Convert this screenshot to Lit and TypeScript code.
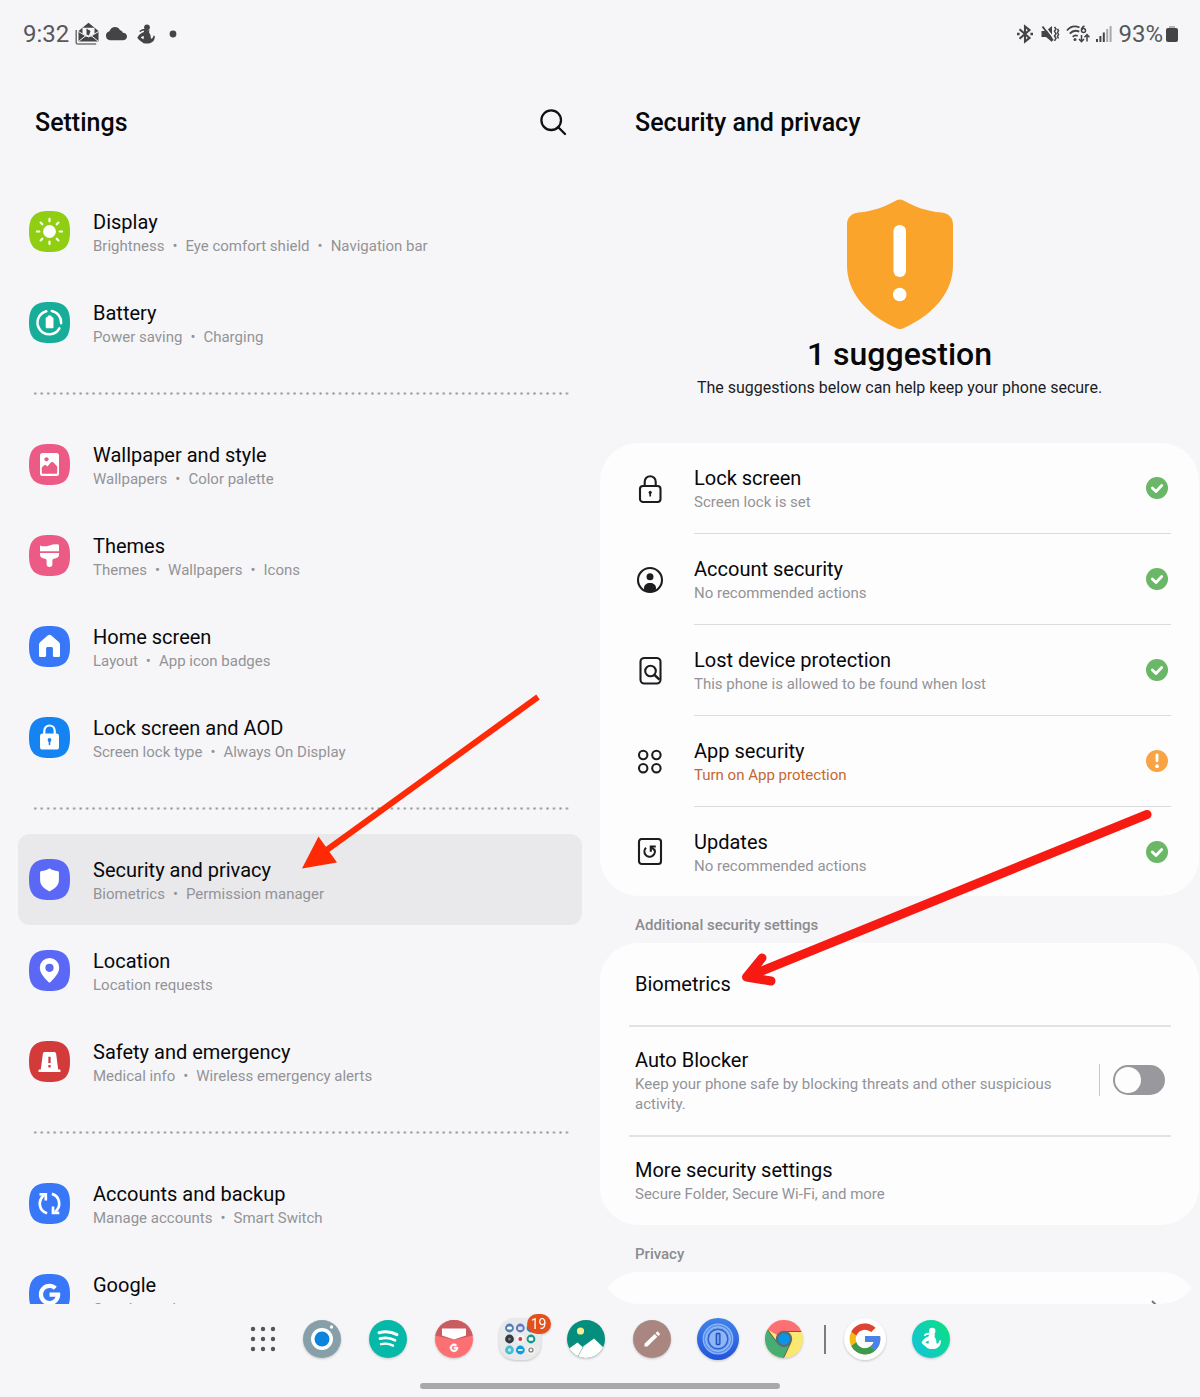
import { LitElement, html, css, svg, nothing, type TemplateResult, type SVGTemplateResult } from "lit";
import { customElement, state } from "lit/decorators.js";
import { classMap } from "lit/directives/class-map.js";

interface MenuItem {
  title: string;
  details: string[];
  color: string;
  glyph: SVGTemplateResult;
  selected?: boolean;
}

interface SecurityItem {
  title: string;
  detail: string;
  glyph: SVGTemplateResult;
  ok: boolean;
}

const G_PATH =
  "M43.6 20H24v8h11.3c-1.6 4.7-6.1 8-11.3 8-6.6 0-12-5.4-12-12s5.4-12 12-12c3.1 0 5.8 1.2 8 3l5.6-5.6C34 6.1 29.3 4 24 4 13 4 4 13 4 24s9 20 20 20 20-9 20-20c0-1.3-.1-2.7-.4-4z";

/* Glyphs for the coloured menu tiles, on a 41 x 41 grid. */
const sun = svg`<circle cx="20.5" cy="20.5" r="6.4" fill="#fff"/>
  <g stroke="#fff" stroke-width="2.2" stroke-linecap="round">
    ${[0, 45, 90, 135, 180, 225, 270, 315].map(
      (a) => svg`<path d="M20.500 7.900v2.400" transform=${`rotate(${a} 20.5 20.5)`}/>`
    )}
  </g>`;
const battery = svg`<g fill="none" stroke="#fff" stroke-width="2.500" stroke-linecap="round">
    <path d="M17.300 9.200A11.700 11.700 0 1 0 30.400 26.300"/>
    <path d="M22.800 9A11.700 11.700 0 0 1 32.100 21.200"/></g>
  <path fill="#fff" d="M18.600 15.200v-.6c0-.6.4-1 1-1h2c.6 0 1 .4 1 1v.6h.6c.8 0 1.300.5 1.300 1.300v8.400c0 .8-.5 1.300-1.300 1.300h-5.200c-.8 0-1.300-.5-1.300-1.300v-8.400c0-.8.500-1.300 1.300-1.300z"/>`;
const wallpaper = svg`<rect x="11" y="9" width="19" height="23" rx="2.500" fill="#fff"/>
  <circle cx="17.500" cy="15.300" r="2.100" fill="#ec5a86"/>
  <path fill="#ec5a86" d="M12.800 23.800c1.500-2.200 3-3.400 4.200-2.500l1.400 1.100 3.200-3.600c1-1.100 2.200-1.100 3.200 0l3.400 3.700v5.900c0 .8-.5 1.300-1.300 1.300H14.100c-.8 0-1.300-.5-1.300-1.300z"/>`;
const brush = svg`<g fill="#fff"><path d="M11 10.400c3 1.600 6 .8 9.500 0 3.500-1 6.500-1.400 9.500-.6v6.400H11z"/>
  <path d="M11 18h19v1.600c0 2.600-1.600 3.600-4 3.800-2 .2-2.600.8-2.600 2.400v3.200a2.900 2.900 0 0 1-5.800 0v-3.200c0-1.600-.6-2.200-2.600-2.400-2.400-.2-4-1.200-4-3.800z"/></g>`;
const home = svg`<path fill="#fff" d="M19 9.300c.9-.8 2.100-.8 3 0l7.800 6.700c.8.7 1.200 1.500 1.200 2.500v10.900c0 1-.6 1.600-1.600 1.600h-4c-.9 0-1.500-.6-1.500-1.500v-7c0-.9-.6-1.500-1.500-1.500h-3.800c-.9 0-1.500.6-1.500 1.500v7c0 .9-.6 1.500-1.500 1.500h-4c-1 0-1.600-.6-1.600-1.600V18.500c0-1 .4-1.800 1.200-2.500z"/>`;
const padlock = svg`<path d="M15.300 18v-4.300a5.200 5.200 0 0 1 10.400 0V18" fill="none" stroke="#fff" stroke-width="2.200"/>
  <rect x="11" y="16.500" width="19" height="16" rx="2.600" fill="#fff"/>
  <circle cx="20.500" cy="23" r="1.900" fill="#1583f2"/><path d="M20.500 23v4.500" stroke="#1583f2" stroke-width="1.600" stroke-linecap="round"/>`;
const shield = svg`<path fill="#fff" d="M20.500 9.200c2.700 1.800 5.300 2.600 8 2.800.9.100 1.400.7 1.400 1.500v7.600c0 5.300-4 9-9.400 11.300-5.400-2.300-9.400-6-9.400-11.300v-7.600c0-.8.5-1.400 1.400-1.500 2.700-.2 5.300-1 8-2.800z"/>`;
const pin = svg`<path fill="#fff" fill-rule="evenodd" d="M20.500 8a9.700 9.700 0 0 0-9.700 9.700c0 5.600 5 10.600 8.600 14.300.7.700 1.500.7 2.200 0 3.600-3.700 8.600-8.700 8.600-14.300A9.700 9.700 0 0 0 20.500 8zm0 13.900a4.100 4.100 0 1 1 0-8.200 4.100 4.100 0 0 1 0 8.200z"/>`;
const siren = svg`<path fill="#fff" d="M15.800 11h9.400c1 0 1.700.6 1.900 1.600l2.100 15.800h1.300c.6 0 1 .4 1 1V31h-22v-1.600c0-.6.4-1 1-1h1.300l2.100-15.800c.2-1 .9-1.600 1.900-1.600z"/>
  <path d="M20.500 15.700v6.300M20.500 24v2.400" stroke="#d33b3b" stroke-width="2.300"/>`;
const sync = svg`<g fill="none" stroke="#fff" stroke-width="2.700"><path d="M18.100 30.300C9.800 27.800 8.400 18 14.900 12.200"/>
  <path d="M10.500 11.300h6.300v6.300"/><path d="M22.900 10.900c8.300 2.500 9.700 12.300 3.200 18.100"/><path d="M30.300 29.900H24v-6.300"/></g>`;
const googleG = svg`<path fill="#fff" transform="translate(7.700 7.700) scale(.535)" d=${G_PATH}/>`;

const MENU: MenuItem[][] = [
  [
    { title: "Display", details: ["Brightness", "Eye comfort shield", "Navigation bar"], color: "#8fce12", glyph: sun },
    { title: "Battery", details: ["Power saving", "Charging"], color: "#17ad98", glyph: battery },
  ],
  [
    { title: "Wallpaper and style", details: ["Wallpapers", "Color palette"], color: "#ec5a86", glyph: wallpaper },
    { title: "Themes", details: ["Themes", "Wallpapers", "Icons"], color: "#ec5a86", glyph: brush },
    { title: "Home screen", details: ["Layout", "App icon badges"], color: "#3878f8", glyph: home },
    { title: "Lock screen and AOD", details: ["Screen lock type", "Always On Display"], color: "#1583f2", glyph: padlock },
  ],
  [
    { title: "Security and privacy", details: ["Biometrics", "Permission manager"], color: "#5b68f6", glyph: shield, selected: true },
    { title: "Location", details: ["Location requests"], color: "#5b68f6", glyph: pin },
    { title: "Safety and emergency", details: ["Medical info", "Wireless emergency alerts"], color: "#d33b3b", glyph: siren },
  ],
  [
    { title: "Accounts and backup", details: ["Manage accounts", "Smart Switch"], color: "#3878f8", glyph: sync },
    { title: "Google", details: ["Google services"], color: "#3878f8", glyph: googleG },
  ],
];

/* Line glyphs for the security card, on a 28 x 28 grid. */
const SECURITY: SecurityItem[] = [
  {
    title: "Lock screen",
    detail: "Screen lock is set",
    ok: true,
    glyph: svg`<rect x="4" y="11" width="20.500" height="16" rx="3"/><path d="M8.700 11V6.700a5.500 5.500 0 0 1 11 0v4.300"/>
      <circle cx="14.200" cy="17.500" r="1.200" fill="#1d1d20" stroke-width="1"/><path d="M14.200 18v3.500" stroke-width="1.700"/>`,
  },
  {
    title: "Account security",
    detail: "No recommended actions",
    ok: true,
    glyph: svg`<circle cx="14" cy="14" r="12"/><circle cx="14" cy="10.700" r="3.500" fill="#1d1d20" stroke="none"/>
      <path d="M8 23.500v-1.500c0-3 2.500-5 6-5s6 2 6 5v1.500c-3.500 3-8.500 3-12 0z" fill="#1d1d20" stroke="none"/>`,
  },
  {
    title: "Lost device protection",
    detail: "This phone is allowed to be found when lost",
    ok: true,
    glyph: svg`<rect x="4.500" y="1" width="20" height="25.500" rx="3.800"/><circle cx="14.500" cy="14" r="5.300"/><path d="M18.500 18l5 4.600" stroke-width="2.400"/>`,
  },
  {
    title: "App security",
    detail: "Turn on App protection",
    ok: false,
    glyph: svg`<circle cx="7.200" cy="7" r="4.200"/><circle cx="20.400" cy="7" r="4.200"/><circle cx="7.200" cy="20.200" r="4.200"/><circle cx="20.400" cy="20.200" r="4.200"/>`,
  },
  {
    title: "Updates",
    detail: "No recommended actions",
    ok: true,
    glyph: svg`<rect x="3" y="1" width="22" height="25" rx="2.800"/><path d="M10 9.800a5.200 5.200 0 1 0 8.200 1.200"/><path d="M19.800 8.500h-5v5.200"/><path d="M14.800 8.500l3.600 3.500"/>`,
  },
];

const figure = svg`<circle cx="10.500" cy="3.400" r="3"/>
  <path d="M8.300 5.300c1.600 1.500 4.100 1.600 4.800.6l-.5 3c1.200 1.500 2 3.300 1.800 5.700l.7.700c1.300-.4 1.900-1.700 2.200-3.300l1.300.3c.1 2.600-.6 4.600-2.300 6-1.600 1.400-3.600 2-6 2-2.500 0-4.300-.7-5.400-2C2.800 17 1.300 15.600.500 14.200c1.200-2.800 3.600-4.700 6.800-5.900l.2-1.300C5.800 6.800 4.700 7.200 3.800 8.300l-1.300-.6C3.600 5.700 5.900 4.700 8.300 5.300zM4 14c1 .8 2 1.400 3 1.700l.3-3.200C6 12.600 5 13 4 14z" fill-rule="evenodd"/>`;

interface DockApp {
  name: string;
  art: TemplateResult;
  badge?: string;
}

/* Dock artwork, on a 42 x 42 grid. */
const DOCK: DockApp[] = [
  {
    name: "Camera",
    art: html`<svg viewBox="0 0 42 42" aria-hidden="true"><circle cx="21" cy="21" r="19" fill="#869fa8"/>
      <circle cx="21" cy="21" r="11" fill="#fff"/><circle cx="21" cy="21" r="7.500" fill="#0a84dc"/><circle cx="30.500" cy="9" r="1.700" fill="#fff"/></svg>`,
  },
  {
    name: "Spotify",
    art: html`<svg viewBox="0 0 42 42" aria-hidden="true"><circle cx="21" cy="21" r="19" fill="#06b8a8"/>
      <g fill="none" stroke="#fff" stroke-linecap="round"><path d="M12 14.700c6-1.600 12.500-1.100 18 1.900" stroke-width="3"/>
      <path d="M13 20.600c5-1.300 10.300-.8 15 1.700" stroke-width="2.700"/><path d="M14 26.200c4-1 8.200-.6 12 1.400" stroke-width="2.400"/></g></svg>`,
  },
  {
    name: "Mail",
    art: html`<svg viewBox="0 0 42 42" aria-hidden="true"><defs><clipPath id="mail"><circle cx="21" cy="21" r="19"/></clipPath></defs>
      <g clip-path="url(#mail)"><path fill="#fc7074" d="M0 0h42v42H0z"/><path fill="#c95c60" d="M0 0h42v17L21 22 0 17z"/>
      <path fill="#fff" d="M9 10.500h24v7L21 21.500l-12-4z"/></g>
      <path fill="#fff" transform="translate(16.200 25) scale(.2)" stroke="#fff" stroke-width="3" d=${G_PATH} /></svg>`,
  },
  {
    name: "Folder",
    badge: "19",
    art: html`<svg viewBox="0 0 42 42" aria-hidden="true"><rect width="42" height="42" rx="16" fill="#e8e9ea"/>
      <circle cx="10.500" cy="10" r="4.400" fill="#4f7fb5"/><rect x="8" y="8.500" width="5" height="3" rx="1.500" fill="#fff"/>
      <circle cx="21.300" cy="10" r="4.400" fill="#6277bd"/><rect x="19" y="8.500" width="4.600" height="3.500" rx="1" fill="#dfe4f5"/>
      <circle cx="32" cy="10" r="4.400" fill="#188bd8"/>
      <circle cx="10.500" cy="21" r="4.400" fill="#34393f"/><circle cx="10.500" cy="21" r="1.500" fill="#777d85"/>
      <circle cx="21.300" cy="21" r="4.400" fill="#f3f3f3"/><circle cx="21.300" cy="21" r="1.900" fill="#d8324a"/>
      <circle cx="32" cy="21" r="4.400" fill="#139a8d"/><rect x="29.700" y="19.300" width="4.400" height="3.400" rx="1" fill="#fff"/>
      <circle cx="10.500" cy="32" r="4.400" fill="#46bdd3"/><circle cx="10.500" cy="32" r="1.700" fill="#b9e8f0"/>
      <circle cx="21.300" cy="32" r="4.400" fill="#0d9ddd"/><rect x="18.800" y="31" width="5" height="2" rx="1" fill="#d5effb"/>
      <circle cx="32" cy="32" r="4.400" fill="#f5f5f0"/><circle cx="32" cy="32" r="2" fill="none" stroke="#777" stroke-width="1.200"/></svg>`,
  },
  {
    name: "Gallery",
    art: html`<svg viewBox="0 0 42 42" aria-hidden="true"><defs><clipPath id="pics"><circle cx="21" cy="21" r="19"/></clipPath></defs>
      <g clip-path="url(#pics)"><path fill="#058d7e" d="M0 0h42v42H0z"/><circle cx="15.500" cy="13" r="3.600" fill="#f6ee8e"/>
      <path fill="#fff" d="M-1 34L12.500 24.500l5 4.500 11.500-8.500L42 33v10H-1z"/><path d="M19 27.500L11.500 41" stroke="#9cc9c3" stroke-width="1"/></g></svg>`,
  },
  {
    name: "Notes",
    art: html`<svg viewBox="0 0 42 42" aria-hidden="true"><circle cx="21" cy="21" r="19" fill="#a98780"/>
      <path fill="#fff" d="M13.500 25.700L23.600 16l2.700 2.700-9.900 9.900h-2.900zM24.500 15.200l1.300-1.300c.5-.5 1-.5 1.500 0l1.300 1.300c.5.5.5 1 0 1.500l-1.300 1.300z"/></svg>`,
  },
  {
    name: "1Password",
    art: html`<svg viewBox="0 0 42 42" aria-hidden="true"><defs><linearGradient id="vault" x2="0" y2="1"><stop stop-color="#3f83ea"/><stop offset="1" stop-color="#2453da"/></linearGradient></defs>
      <circle cx="21" cy="21" r="21" fill="url(#vault)"/><circle cx="21" cy="21" r="14.800" fill="#5a91ee" stroke="#8fb8f7" stroke-width="1.200"/>
      <circle cx="21" cy="21" r="12.300" fill="#79a5f0" stroke="#9cc0f8" stroke-width="1"/><circle cx="21" cy="21" r="9.800" fill="#8fb5f5" stroke="#2a61d0" stroke-width="1.400"/>
      <rect x="19.300" y="15.500" width="3.600" height="11" rx=".8" fill="#6f9dee" stroke="#1f50b8" stroke-width="1.300"/></svg>`,
  },
  {
    name: "Chrome",
    art: html`<svg viewBox="0 0 42 42" aria-hidden="true"><circle cx="21" cy="21" r="19" fill="#fbe870"/>
      <path fill="#fc7075" d="M21 21L4.500 11.500A19 19 0 0 1 38.400 13.500H21z"/><path fill="#46ae73" d="M4.500 11.500A19 19 0 0 0 20.700 40l6.500-14.500L21 21 13.500 23z"/>
      <path fill="none" stroke="#795b42" stroke-width="1" d="M38.200 13.500H21M4.800 12l9.300 12.500M20.800 39.500l6.800-14.500"/>
      <circle cx="21" cy="21" r="8.200" fill="#557071"/><circle cx="21" cy="21" r="5.700" fill="#0b94ec"/></svg>`,
  },
];

const RECENT: DockApp[] = [
  {
    name: "Google",
    art: html`<svg viewBox="0 0 42 42" aria-hidden="true"><circle cx="21" cy="21" r="21" fill="#fff"/><g transform="translate(2.500 2.500) scale(.77)">
      <path fill="#f5b916" d=${G_PATH} />
      <path fill="#dd4437" d="M6.300 14.700l6.600 4.800C14.700 15.100 19 12 24 12c3.100 0 5.800 1.200 8 3l5.600-5.600C34 6.100 29.300 4 24 4 16.300 4 9.700 8.300 6.300 14.700z"/>
      <path fill="#3a9b50" d="M24 44c5.200 0 9.900-2 13.400-5.200l-6.200-5.200A11.900 11.900 0 0 1 24 36c-5.200 0-9.600-3.300-11.300-7.900l-6.500 5C9.500 39.600 16.200 44 24 44z"/>
      <path fill="#4a82ea" d="M43.600 20H24v8h11.300a12 12 0 0 1-4.100 5.600l6.200 5.200C41.600 35.200 44 30 44 24c0-1.300-.1-2.700-.4-4z"/></g></svg>`,
  },
  {
    name: "Fitness",
    art: html`<svg viewBox="0 0 42 42" aria-hidden="true"><defs><linearGradient id="fit" x1="0" y1=".8" x2="1" y2=".2"><stop stop-color="#12c4d8"/><stop offset="1" stop-color="#0bdf83"/></linearGradient></defs>
      <circle cx="21" cy="21" r="19" fill="url(#fit)"/><g fill="#fff" transform="translate(11 9.300) scale(1.070)">${figure}</g></svg>`,
  },
];

@customElement("app-root")
export class AppRoot extends LitElement {
  @state() private autoBlocker = false;

  static styles = css`
    :host {
      display: block;
      font-family: Roboto, "Noto Sans", sans-serif;
      color: #08080a;
      background: #f6f6f8;
    }
    * {
      box-sizing: border-box;
    }
    a {
      color: inherit;
      text-decoration: none;
    }
    button {
      border: 0;
      padding: 0;
      background: none;
      font: inherit;
      color: inherit;
    }
    svg {
      display: block;
    }
    h1,
    h2,
    h3,
    p,
    ul {
      margin: 0;
      padding: 0;
      list-style: none;
      font-weight: 400;
    }
    .screen {
      position: relative;
      display: grid;
      grid-template-rows: auto minmax(0, 1fr) auto;
      height: 100vh;
      overflow: hidden;
    }
    .status {
      display: flex;
      justify-content: space-between;
      align-items: center;
      height: 68px;
      padding: 0 22px 0 23px;
      font-size: 24px;
      color: #58585a;
    }
    .status-group {
      display: flex;
      align-items: center;
      gap: 6px;
    }
    .status-text {
      line-height: 28px;
    }
    .level {
      display: flex;
      align-items: center;
      gap: 3px;
    }
    .panes {
      display: grid;
      grid-template-columns: 1fr 1fr;
      overflow: hidden;
    }
    .pane {
      min-width: 0;
      overflow: hidden;
    }
    .pane-detail {
      margin-right: 1px;
      border-radius: 0 0 38px 38px;
    }
    .pane-header {
      display: flex;
      justify-content: space-between;
      align-items: center;
      padding: 35px 32px 43px 35px;
    }
    .pane-title {
      font-size: 25px;
      font-weight: 500;
      line-height: 40px;
    }
    .menu {
      padding: 0 18px;
    }
    .group + .group::before {
      content: "";
      display: block;
      height: 3px;
      margin: 24px 11px 24px 14px;
      background: radial-gradient(circle, #8a8a8e, transparent 2px) 0 0 / calc(100% / 83) 3px;
    }
    .menu-row {
      display: flex;
      align-items: center;
      gap: 23px;
      min-height: 91px;
      padding: 0 11px;
      border-radius: 12px;
    }
    .menu-row.selected {
      background: #e9e9eb;
    }
    .tile {
      flex: none;
      width: 41px;
      height: 41px;
    }
    .row-title {
      font-size: 20px;
      line-height: 28px;
    }
    .row-detail {
      font-size: 15px;
      line-height: 20px;
      color: #939397;
    }
    .row-detail.alert {
      color: #c4682f;
    }
    .row-detail .dot {
      margin: 0 8px;
    }
    .hero {
      display: flex;
      flex-direction: column;
      align-items: center;
      padding: 13px 0 45px;
      text-align: center;
    }
    .hero-shield {
      width: 108px;
      height: 130px;
    }
    .hero-title {
      margin: 5px 0 4px;
      font-size: 32px;
      font-weight: 500;
      line-height: 40px;
    }
    .hero-text {
      font-size: 16px;
      line-height: 20px;
      color: #1c1c1f;
    }
    .card {
      border-radius: 38px;
      background: #fdfdfe;
    }
    .security {
      padding: 0 28px 0 36px;
    }
    .security-row {
      display: flex;
      gap: 30px;
    }
    .security-icon {
      flex: none;
      align-self: center;
      width: 28px;
      height: 28px;
    }
    .security-body {
      display: flex;
      flex: 1;
      justify-content: space-between;
      align-items: center;
      min-height: 91px;
      padding-right: 3px;
      border-bottom: 1px solid #dcdcdf;
    }
    .security li:last-child .security-body {
      min-height: 89px;
      border-bottom: 0;
    }
    .section-label {
      padding: 19px 35px 8px;
      font-size: 15px;
      font-weight: 500;
      line-height: 20px;
      color: #8b8b90;
    }
    .extra {
      padding: 0 28px 0 29px;
    }
    .extra-row {
      display: flex;
      align-items: center;
      justify-content: space-between;
      gap: 40px;
      padding: 19px 6px 21px;
      border-bottom: 2px solid #e3e3e6;
    }
    .extra-row.single {
      padding: 27px 6px;
    }
    .extra-row:last-child {
      border-bottom: 0;
    }
    .switch-area {
      display: flex;
      flex: none;
      align-items: center;
      gap: 13px;
    }
    .switch-area::before {
      content: "";
      width: 1px;
      height: 32px;
      background: #c9c9cc;
    }
    .switch {
      appearance: none;
      width: 52px;
      height: 30px;
      margin: 0;
      padding: 2px;
      border-radius: 15px;
      background: #99999d;
    }
    .switch::before {
      content: "";
      display: block;
      width: 26px;
      height: 26px;
      border-radius: 50%;
      background: #fdfdfe;
    }
    .switch:checked {
      background: #3878f8;
    }
    .switch:checked::before {
      margin-left: 22px;
    }
    .privacy {
      display: flex;
      justify-content: flex-end;
      height: 120px;
      padding: 28px 40px;
    }
    .dock {
      display: flex;
      flex-direction: column;
      align-items: center;
      padding: 14px 0 8px;
    }
    .dock-apps {
      display: flex;
      justify-content: center;
      align-items: center;
      gap: 24px;
    }
    .dock-recent {
      display: flex;
      gap: 24px;
      margin-left: -5px;
    }
    .dock-recent::before {
      content: "";
      align-self: center;
      width: 2px;
      height: 29px;
      margin-right: -6px;
      background: #7c7c7f;
    }
    .drawer {
      width: 28px;
    }
    .app {
      position: relative;
      width: 42px;
      height: 42px;
      filter: drop-shadow(0 1px 1px rgb(0 0 0 / 20%));
    }
    .badge {
      position: absolute;
      top: -4px;
      right: -10px;
      padding: 0 4px;
      border-radius: 10px;
      background: #e4501c;
      color: #fff;
      font-size: 14px;
      line-height: 20px;
    }
    .handle {
      width: 30%;
      height: 6px;
      margin-top: 23px;
      border-radius: 3px;
      background: #a8a8aa;
    }
    .marks {
      position: absolute;
      top: 0;
      left: 0;
      width: 100%;
      pointer-events: none;
    }
  `;

  private statusBar() {
    return html`<header class="status">
      <div class="status-group">
        <span class="status-text">9:32</span>
        <svg width="24" height="24" viewBox="0 0 24 24" fill="#444446" aria-hidden="true">
          <path d="M3.500 9L13.500.8 23.500 9v10.500h-20z" /><path fill="#f6f6f8" d="M7.500 5.700h12v6L13.500 15l-6-3.300z" />
          <path d="M11.500 6.500l4 2.500-1.500 4.500-2.500-1z" />
          <path d="M3.500 19.500l7.500-6 2.500 1.500 2.500-1.500 7.500 6M3.500 9.500l8 5M23.500 9.500l-8 5" fill="none" stroke="#f6f6f8" stroke-width="1" />
          <path d="M1.200 8v12.500c0 1 .5 1.500 1.500 1.500h18.500" fill="none" stroke="#77777a" stroke-width="1.600" />
        </svg>
        <svg width="22" height="16" viewBox="0 0 22 16" fill="#444446" aria-hidden="true">
          <path d="M5 14.200a4.600 4.600 0 0 1-.6-9C5.500 2.500 7.700 1 10 1c2.200 0 4 1 5 3.200 1.300.2 2.400 1.100 2.800 2.600 2.400.1 4.200 1.600 4.200 3.700s-1.700 3.700-4.200 3.700z" />
        </svg>
        <svg width="28" height="20" viewBox="-4 0 29 20.700" fill="#444446" aria-hidden="true">${figure}</svg>
        <svg width="12" height="8" viewBox="0 0 12 8" fill="#444446" aria-hidden="true"><circle cx="6" cy="4" r="3.400" /></svg>
      </div>
      <div class="status-group">
        <svg width="18" height="20" viewBox="0 0 18 20" fill="none" stroke="#444446" stroke-width="2.100" aria-hidden="true">
          <path d="M3.500 5.200l10 8.700L9 17.500v-15l4.500 3.600-10 8.700" /><path d="M1 10h2.600M14.400 10H17" stroke-width="2.600" />
        </svg>
        <svg width="20" height="20" viewBox="0 0 20 20" fill="#444446" aria-hidden="true">
          <path d="M1.500 7h4.500L12 2v16l-6-5H1.500z" /><path d="M4 1.500L15 16" stroke="#f6f6f8" stroke-width="1.500" />
          <path d="M2.500 2.500l10.500 14" stroke="#444446" stroke-width="1.900" />
          <path d="M14.500 3l1.500 2-1.500 2.300L16 9.700l-1.500 2.300 1.500 2.300-1.500 2.500M17.500 5l1 1.500-1 2 1 2-1 2 1 2" fill="none" stroke="#444446" stroke-width="1.500" />
        </svg>
        <svg width="24" height="20" viewBox="0 0 24 20" fill="none" stroke="#444446" stroke-width="1.900" aria-hidden="true">
          <path d="M1 6.500C4.500 2.300 9.500 1.700 13.500 3.500M3.800 9.700c2.700-3 6.300-3.500 9.500-2M6.700 12.800c1.500-1.500 3.400-1.700 5-.8" />
          <circle cx="9" cy="15.500" r="1.500" fill="#444446" stroke="none" />
          <circle cx="17.500" cy="6.500" r="2" stroke-width="1.500" /><path d="M18.500 2c-2 .8-3 2.500-3 4.300" stroke-width="1.500" />
          <path d="M15.500 11v6.500m-2.500-2.500l2.500 2.700 2.500-2.700M21 17.500v-7m-2.500 2.700l2.500-2.700 2.500 2.700" stroke-width="1.500" />
        </svg>
        <svg width="16" height="18" viewBox="0 0 16 18" fill="#444446" aria-hidden="true">
          <path d="M0 14h2v3H0zM3.400 11h2v6h-2zM6.800 7.500h2V17h-2z" /><path fill="#a9a9ac" d="M10.200 4h2v13h-2zM13.600 1h2v16h-2z" />
        </svg>
        <div class="level">
          <span class="status-text">93%</span>
          <svg width="12" height="18" viewBox="0 0 12 18" fill="#444446" aria-hidden="true">
            <path fill="#b3b3b6" d="M3 1h6v3H3z" /><rect y="3" width="12" height="14" rx="2" />
          </svg>
        </div>
      </div>
    </header>`;
  }

  private menuRow(item: MenuItem) {
    return html`<li>
      <a href="#" class=${classMap({ "menu-row": true, selected: !!item.selected })} aria-current=${item.selected ? "page" : nothing}>
        <svg class="tile" viewBox="0 0 41 41" aria-hidden="true">
          <path fill=${item.color} d="M20.500 0C35.500 0 41 5.500 41 20.500S35.500 41 20.500 41 0 35.500 0 20.500 5.500 0 20.500 0z" />
          ${item.glyph}
        </svg>
        <div>
          <h3 class="row-title">${item.title}</h3>
          <p class="row-detail">${item.details.map((d, i) => html`${i ? html`<span class="dot">•</span>` : nothing}${d}`)}</p>
        </div>
      </a>
    </li>`;
  }

  private securityRow(item: SecurityItem) {
    return html`<li>
      <a href="#" class="security-row">
        <svg class="security-icon" viewBox="0 0 28 28" fill="none" stroke="#1d1d20" stroke-width="2.100" aria-hidden="true">${item.glyph}</svg>
        <div class="security-body">
          <div>
            <h3 class="row-title">${item.title}</h3>
            <p class=${classMap({ "row-detail": true, alert: !item.ok })}>${item.detail}</p>
          </div>
          <svg width="22" height="22" viewBox="0 0 22 22" aria-hidden="true">
            <circle cx="11" cy="11" r="11" fill=${item.ok ? "#69b767" : "#f8a344"} />
            ${item.ok
              ? svg`<path d="M6.300 11l3.700 3.500L15.700 8.500" fill="none" stroke="#fff" stroke-width="2.800" stroke-linecap="round" stroke-linejoin="round"/>`
              : svg`<path d="M11 5v5.800" stroke="#fff" stroke-width="2.900" stroke-linecap="round"/><circle cx="11" cy="16.200" r="1.900" fill="#fff"/>`}
          </svg>
        </div>
      </a>
    </li>`;
  }

  private dockApp(app: DockApp) {
    return html`<button class="app" aria-label=${app.name}>
      ${app.art}${app.badge ? html`<span class="badge">${app.badge}</span>` : nothing}
    </button>`;
  }

  render() {
    return html`<div class="screen">
      ${this.statusBar()}
      <main class="panes">
        <section class="pane">
          <div class="pane-header">
            <h1 class="pane-title">Settings</h1>
            <button aria-label="Search">
              <svg width="30" height="30" viewBox="0 0 30 30" fill="none" stroke="#111114" stroke-width="2.300" stroke-linecap="round" aria-hidden="true">
                <circle cx="13.200" cy="12.200" r="9.800" /><path d="M20.300 19.300l6.700 6.700" />
              </svg>
            </button>
          </div>
          <nav class="menu">
            ${MENU.map((group) => html`<ul class="group">${group.map((item) => this.menuRow(item))}</ul>`)}
          </nav>
        </section>
        <section class="pane pane-detail">
          <div class="pane-header"><h2 class="pane-title">Security and privacy</h2></div>
          <div class="hero">
            <svg class="hero-shield" viewBox="0 0 108 130" aria-hidden="true">
              <path fill="#faa42c" d="M50.500 1.200c2.200-1.100 4.300-1.100 6.500 0 11.500 6.600 24 11 38.500 12.400C102.500 14.300 107 18.800 107 25.500V66c0 27-18.500 49-49.500 63.200-2.500 1.100-4.500 1.100-7 0C19.500 115 1 93 1 66V25.500c0-6.700 4.500-11.200 11.500-11.900C27 12.200 39 7.800 50.500 1.200z" />
              <rect x="47.500" y="26" width="12.500" height="52" rx="6" fill="#fff" /><circle cx="53.700" cy="95.500" r="6.800" fill="#fff" />
            </svg>
            <h2 class="hero-title">1 suggestion</h2>
            <p class="hero-text">The suggestions below can help keep your phone secure.</p>
          </div>
          <ul class="card security">
            ${SECURITY.map((item) => this.securityRow(item))}
          </ul>
          <h2 class="section-label">Additional security settings</h2>
          <div class="card extra">
            <a href="#" class="extra-row single"><h3 class="row-title">Biometrics</h3></a>
            <div class="extra-row">
              <label for="auto-blocker">
                <h3 class="row-title">Auto Blocker</h3>
                <p class="row-detail">Keep your phone safe by blocking threats and other suspicious activity.</p>
              </label>
              <span class="switch-area">
                <input
                  id="auto-blocker"
                  class="switch"
                  type="checkbox"
                  role="switch"
                  .checked=${this.autoBlocker}
                  @change=${(e: Event) => (this.autoBlocker = (e.target as HTMLInputElement).checked)}
                />
              </span>
            </div>
            <a href="#" class="extra-row">
              <div>
                <h3 class="row-title">More security settings</h3>
                <p class="row-detail">Secure Folder, Secure Wi-Fi, and more</p>
              </div>
            </a>
          </div>
          <h2 class="section-label">Privacy</h2>
          <div class="card privacy">
            <svg width="8" height="14" viewBox="0 0 8 14" fill="none" stroke="#77777b" stroke-width="2" aria-hidden="true"><path d="M1 1l6 6-6 6" /></svg>
          </div>
        </section>
      </main>
      <footer class="dock">
        <div class="dock-apps">
          <button class="drawer" aria-label="Apps">
            <svg width="28" height="28" viewBox="0 0 28 28" fill="#555557" aria-hidden="true">
              ${[4, 14, 24].map((y) => [4, 14, 24].map((x) => svg`<circle cx=${x} cy=${y} r="2.200"/>`))}
            </svg>
          </button>
          ${DOCK.map((app) => this.dockApp(app))}
          <div class="dock-recent">${RECENT.map((app) => this.dockApp(app))}</div>
        </div>
        <div class="handle"></div>
      </footer>
      <svg class="marks" viewBox="0 0 1200 1397" aria-hidden="true">
        <path d="M538 697L324 852" stroke="#fd2a05" stroke-width="6" />
        <path d="M302 868.500l16.500-32 18.500 26z" fill="#fd2a05" />
        <path d="M1147 814.500L747 977M762 958l-15.500 19 24.500 4" fill="none" stroke="#f71a12" stroke-width="9" stroke-linecap="round" stroke-linejoin="round" />
      </svg>
    </div>`;
  }
}
